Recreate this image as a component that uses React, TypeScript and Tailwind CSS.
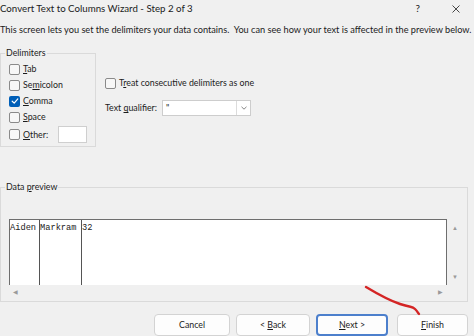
import React from "react";

const Check = ({ checked = false }: { checked?: boolean }) =>
  checked ? (
    <span className="flex h-[11px] w-[11px] shrink-0 items-center justify-center rounded-[2px] bg-[#005fb8]">
      <svg width="8" height="8" viewBox="0 0 8 8" fill="none">
        <path d="M1.2 4.2 L3.2 6.1 L6.8 1.9" stroke="white" strokeWidth="1.2" strokeLinecap="round" strokeLinejoin="round" />
      </svg>
    </span>
  ) : (
    <span className="h-[11px] w-[11px] shrink-0 rounded-[2px] border border-[#8a8a8a] bg-[#f7f7f7]" />
  );

const U = ({ children }: { children: React.ReactNode }) => (
  <u className="underline underline-offset-[1px]">{children}</u>
);

const delimiters = [
  { pre: "", key: "T", post: "ab", checked: false },
  { pre: "Se", key: "m", post: "icolon", checked: false },
  { pre: "", key: "C", post: "omma", checked: true },
  { pre: "", key: "S", post: "pace", checked: false },
];

const Button = ({ children, primary = false, className = "" }: { children: React.ReactNode; primary?: boolean; className?: string }) => (
  <div
    className={
      "flex h-[22px] items-center justify-center rounded-[4px] bg-[#fdfdfd] text-[8.8px] " +
      (primary ? "border-2 border-[#4c7fcc] " : "border border-[#d3d3d3] ") +
      className
    }
  >
    <span>{children}</span>
  </div>
);

export default function App() {
  return (
    <div className="relative h-[336px] w-[474px] overflow-hidden bg-[#f0f0f0] font-['Lato',sans-serif] text-[#1b1b1b]">
      {/* title bar */}
      <div className="flex h-[17px] items-center">
        <span className="text-[9.7px]">Convert Text to Columns Wizard - Step 2 of 3</span>
        <span className="ml-auto text-[10px]">?</span>
        <svg className="ml-[32px] mr-[14px]" width="8" height="8" viewBox="0 0 8 8">
          <path d="M0.5 0.5 L7.5 7.5 M7.5 0.5 L0.5 7.5" stroke="#333" strokeWidth="0.9" />
        </svg>
      </div>

      <div className="mt-[7px] h-[12px] whitespace-nowrap text-[9.2px] leading-[12px]">
        This screen lets you set the delimiters your data contains.&nbsp; You can see how your text is affected in the preview below.
      </div>

      <div className="mt-[11px] flex">
        <fieldset className="w-[96px] border border-[#dadada] pb-[3px] pl-[8px] pt-[2px]">
          <legend className="-ml-[4px] px-[1px] text-[8.8px] leading-[12px]">Delimiters</legend>
          {delimiters.map((d) => (
            <div key={d.post} className="flex h-[16px] items-center gap-[3px] text-[8.8px]">
              <Check checked={d.checked} />
              <span>
                {d.pre}
                <U>{d.key}</U>
                {d.post}
              </span>
            </div>
          ))}
          <div className="mt-[1px] flex h-[17px] items-center gap-[3px] text-[8.8px]">
            <Check />
            <span className="w-[32px]">
              <U>O</U>ther:
            </span>
            <div className="h-[17px] w-[29px] border border-[#cfcfcf] bg-white" />
          </div>
        </fieldset>

        <div className="ml-[9px] flex flex-col">
          <div className="mt-[28px] flex h-[16px] items-center gap-[3px] text-[8.8px]">
            <Check />
            <span>
              T<U>r</U>eat consecutive delimiters as one
            </span>
          </div>
          <div className="mt-[9px] flex h-[16px] items-center text-[8.8px]">
            <span className="w-[57px]">
              Text <U>q</U>ualifier:
            </span>
            <div className="flex h-[16px] w-[89px] items-center border border-[#cdcdcd] bg-white">
              <span className="ml-[3px] flex-1">"</span>
              <div className="flex h-full w-[14px] items-center justify-center border-l border-[#dcdcdc]">
                <svg width="6" height="4" viewBox="0 0 6 4">
                  <path d="M0.5 0.8 L3 3.2 L5.5 0.8" stroke="#666" strokeWidth="0.8" fill="none" />
                </svg>
              </div>
            </div>
          </div>
        </div>
      </div>

      {/* data preview */}
      <fieldset className="mt-[34px] w-[468px] border border-[#dadada] pb-[3px] pl-[8px] pt-[26px]">
        <legend className="-ml-[4px] px-[1px] text-[8.8px] leading-[12px]">
          Data <U>p</U>review
        </legend>
        <div className="flex">
          <div className="flex h-[66px] w-[438px] border-l border-r border-t border-[#6e6e6e] bg-white font-['Liberation_Mono',monospace] text-[8.7px] leading-[10px] text-[#222]">
            <div className="w-[30px] border-r border-[#555] pt-[3px]">Aiden</div>
            <div className="w-[42px] border-r border-[#555] pt-[3px]">Markram</div>
            <div className="flex-1 pt-[3px]">32</div>
          </div>
          <div className="flex h-[66px] w-[16px] flex-col items-center justify-between py-[4px] text-[6px] text-[#9a9a9a]">
            <span>▲</span>
            <span>▼</span>
          </div>
        </div>
        <div className="flex h-[13px] w-[438px] items-center justify-between px-[4px] text-[6px] text-[#9a9a9a]">
          <span>◀</span>
          <span>▶</span>
        </div>
      </fieldset>

      {/* buttons */}
      <div className="mt-[12px] flex">
        <Button className="ml-[154px] w-[76px]">Cancel</Button>
        <Button className="ml-[6px] w-[74px]">
          &lt; <U>B</U>ack
        </Button>
        <Button primary className="ml-[6px] w-[72px]">
          <U>N</U>ext &gt;
        </Button>
        <Button className="ml-[9px] w-[71px]">
          <U>F</U>inish
        </Button>
      </div>

      {/* red annotation */}
      <svg className="absolute left-[360px] top-[282px]" width="64" height="36" viewBox="0 0 64 36" fill="none">
        <path d="M6 5 C 16 11, 28 18, 40 22 S 52 24, 55 27 S 58 31, 59 32" stroke="#d42525" strokeWidth="2.4" strokeLinecap="round" />
      </svg>
    </div>
  );
}
